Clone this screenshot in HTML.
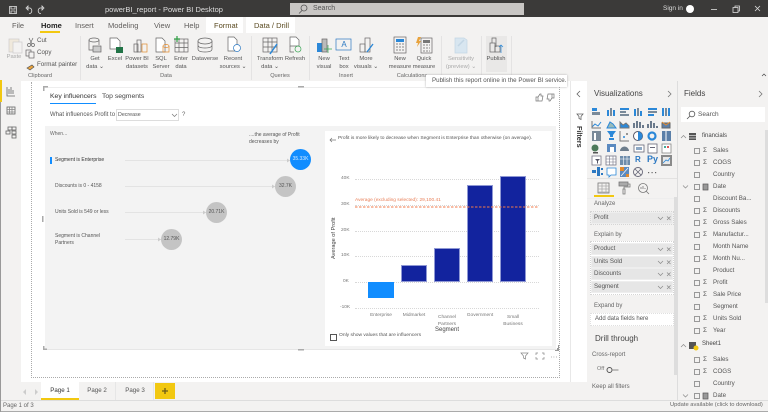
<!DOCTYPE html>
<html><head><meta charset="utf-8"><style>
html,body{margin:0;padding:0;width:768px;height:412px;overflow:hidden;background:#fff}
#r{position:relative;width:768px;height:412px;overflow:hidden;font-family:"Liberation Sans",sans-serif;color:#444;font-size:7px;filter:blur(.35px)}
#r div{position:absolute}
.t{position:absolute;white-space:nowrap;line-height:1}
.c{position:absolute;white-space:nowrap;line-height:1;transform:translateX(-50%);text-align:center}
.tab{font-size:7.500px;top:22px;color:#605e5c}
.l{font-size:5.800px;color:#555}
.g{font-size:5.600px;color:#666;top:74px}
.f{font-size:6.200px;color:#555}
.s{font-size:6.500px;color:#555}
.p{font-size:6.200px;color:#555}
.pill{left:591px;width:82px;height:12px;background:#e6e6e6;border:1px solid #eee;box-sizing:border-box}
#r .cb{width:6px;height:6px;border:1px solid #999;left:694px;box-sizing:border-box;margin-top:-1px}
.bar{background:#12239e;border:1px solid #8f98d4;box-sizing:border-box}
.bub{border-radius:50%;width:21px;height:21px;background:#c4c4c4;font-size:5px;color:#555;text-align:center;line-height:21px}
.ln{height:1px;background:#e3e3e3}
.gl{left:355px;width:184px;border-top:1px dotted #d8d8d8;height:0}
.tk{font-size:4.800px;color:#777}
svg{position:absolute;overflow:visible}
</style></head><body><div id="r">
<!-- title bar -->
<div style="left:0;top:0;width:768px;height:17px;background:#3b3a39"></div>
<div style="left:290px;top:3px;width:234px;height:12px;background:#c8c6c4"></div>
<svg style="left:0;top:0" width="768" height="17" fill="none" stroke="#ddd" stroke-width=".8">
<rect x="9.500" y="6.500" width="7" height="7"/><path d="M11 6.500v2.500h4v-2.500M11 13.500v-2.500h4v2.500"/>
<path d="M26 8l2-2v4zM27 8h3a3 3 0 0 1 0 5.500h-1"/><path d="M44 8l-2-2v4zM43 8h-3a3 3 0 0 0 0 5.500h1"/>
<circle cx="304" cy="8" r="3" stroke="#555"/><path d="M302 10.500l-3 3" stroke="#555"/>
<path d="M711 9.500h6"/><rect x="733" y="7.500" width="5" height="5"/><path d="M735 7.500v-1.500h4.500v5h-1.500"/><path d="M755 6l5 5M760 6l-5 5"/>
</svg>
<span class="t" style="left:105px;top:6px;font-size:7.500px;color:#ddd">powerBI_report - Power BI Desktop</span>
<span class="t" style="left:313px;top:5px;font-size:7px;color:#555">Search</span>
<span class="t" style="left:663px;top:6px;font-size:6.500px;color:#ddd">Sign in</span>
<div style="left:686px;top:5px;width:8px;height:8px;border-radius:50%;background:#fff"></div>
<!-- ribbon -->
<div style="left:0;top:17px;width:768px;height:64px;background:#f3f2f1"></div>
<div style="left:206px;top:17px;width:37px;height:16px;background:#fff"></div>
<div style="left:246px;top:17px;width:49px;height:16px;background:#fff"></div>
<span class="t tab" style="left:12px">File</span>
<span class="t tab" style="left:41px;color:#222;font-weight:bold">Home</span>
<div style="left:40px;top:31px;width:20px;height:2px;background:#f2c811"></div>
<span class="t tab" style="left:75px">Insert</span><span class="t tab" style="left:108px">Modeling</span>
<span class="t tab" style="left:154px">View</span><span class="t tab" style="left:184px">Help</span>
<span class="t tab" style="left:214px;color:#5a4a20">Format</span><span class="t tab" style="left:254px;color:#5a4a20">Data / Drill</span>
<div style="left:486px;top:36px;width:21px;height:36px;background:#e9e8e7"></div>
<svg style="left:0;top:0" width="768" height="81" fill="none" stroke="#666" stroke-width=".7">
<g stroke="#ddd"><path d="M80.500 36v44M251.500 36v44M309.500 36v44M441.500 36v44M481.500 36v44M511.500 36v44"/></g>
<rect x="9" y="39" width="10" height="13" fill="#f0e9dc" stroke="#ccc"/><rect x="13" y="42" width="9" height="11" fill="#f3f2f1" stroke="#ccc"/>
<path d="M29 38l3 6M33 38l-3 6"/><circle cx="29" cy="45" r="1.500"/><circle cx="33" cy="45" r="1.500"/>
<rect x="26" y="50" width="5" height="6"/><rect x="29" y="52" width="5" height="6" fill="#f3f2f1"/>
<path d="M27 68l5-3 2 2-4 3z" fill="#e8a33d" stroke="#555"/>
<ellipse cx="94" cy="40" rx="5" ry="2"/><path d="M89 40v10h5M99 40v5"/><rect x="93" y="46" width="8" height="6" fill="#ccc"/>
<path d="M110 38h7l3 3v8h-10z" fill="#fff"/><rect x="116" y="47" width="7" height="6" fill="#217346" stroke="none"/>
<rect x="134" y="44" width="4" height="8"/><rect x="137" y="40" width="4" height="12"/><rect x="142" y="44" width="5" height="8" stroke="#e08a2e"/>
<path d="M156 38h6l3 3v11h-9z" fill="#fff"/><ellipse cx="166" cy="46" rx="3" ry="1.500" stroke="#e08a2e"/><path d="M163 46v6h6v-6" stroke="#e08a2e"/>
<rect x="175" y="39" width="13" height="13"/><path d="M175 43h13M175 47.500h13M179 39v13M184 39v13"/><path d="M177 36v6M174 39h6" stroke="#2f9e44" stroke-width="1.200"/>
<ellipse cx="205" cy="41" rx="7" ry="3"/><path d="M198 41v8c0 2 3 3 7 3s7-1 7-3v-8M198 45c0 2 3 3 7 3s7-1 7-3"/>
<path d="M228 37h6l3 3v11h-9z" fill="#fff"/><circle cx="237" cy="48" r="3.500" stroke="#2b78c2" fill="#fff"/>
<rect x="263" y="38" width="14" height="14"/><path d="M263 42h14M268 38v14M272 38v14M263 47h14"/><path d="M270 54l7-10" stroke="#2b88d8" stroke-width="1.500"/>
<path d="M290 37h6l3 3v6h-9z" fill="#fff"/><path d="M290 46v6h4"/><circle cx="298" cy="49" r="3" stroke="#3aa655"/>
<rect x="317" y="43" width="5" height="9" fill="#2b88d8" stroke="none"/><rect x="322" y="39" width="5" height="13" fill="#bbb"/><path d="M328 45v8M324 49h8" stroke="#3aa655"/>
<rect x="336" y="39" width="15" height="11" stroke="#2b78c2"/>
<rect x="360" y="44" width="5" height="8"/><rect x="365" y="38" width="5" height="14"/><path d="M367 52l6-8" stroke="#2b88d8" stroke-width="1.300"/>
<rect x="394" y="37" width="12" height="16"/><rect x="396" y="39" width="8" height="3" fill="#2b88d8" stroke="none"/><path d="M396 44h8M396 47h8M396 50h8" stroke-dasharray="2 1"/>
<rect x="421" y="38" width="11" height="15"/><rect x="423" y="40" width="7" height="3" fill="#777" stroke="none"/><path d="M423 45h7M423 48h7M423 51h7" stroke-dasharray="2 1"/><path d="M418 37l-2 6h2l-1 4 4-6h-2l2-4z" fill="#e8a33d" stroke="none"/>
<path d="M455 38h9l3 2v13h-12z" fill="#d8e6f0" stroke="#c3d6e4"/><path d="M458 46l6-6" stroke="#c3d6e4" stroke-width="1.500"/>
<rect x="490" y="43" width="5" height="9"/><path d="M492 43v-5h4v9"/><rect x="495" y="46" width="5" height="6"/><path d="M501 53v-8M499 47l2-2 2 2" stroke="#2b88d8"/>
<path d="M762 76l2-2 2 2" stroke="#444"/>
</svg>
<span class="c l" style="left:14px;top:55px;color:#aaa">Paste</span>
<span class="t" style="left:37px;top:38px;font-size:6.200px;color:#555">Cut</span><span class="t" style="left:37px;top:50px;font-size:6.200px;color:#555">Copy</span><span class="t" style="left:37px;top:62px;font-size:6.200px;color:#555">Format painter</span>
<span class="c l" style="left:95px;top:55px;line-height:8.300px">Get<br>data ⌄</span>
<span class="c l" style="left:115px;top:55px;line-height:8.300px">Excel</span>
<span class="c l" style="left:137px;top:55px;line-height:8.300px">Power BI<br>datasets</span>
<span class="c l" style="left:161px;top:55px;line-height:8.300px">SQL<br>Server</span>
<span class="c l" style="left:181px;top:55px;line-height:8.300px">Enter<br>data</span>
<span class="c l" style="left:205px;top:55px;line-height:8.300px">Dataverse</span>
<span class="c l" style="left:233px;top:55px;line-height:8.300px">Recent<br>sources ⌄</span>
<span class="c l" style="left:270px;top:55px;line-height:8.300px">Transform<br>data ⌄</span>
<span class="c l" style="left:295px;top:55px;line-height:8.300px">Refresh</span>
<span class="c l" style="left:324px;top:55px;line-height:8.300px">New<br>visual</span>
<span class="c l" style="left:344px;top:55px;line-height:8.300px">Text<br>box</span>
<span class="c l" style="left:366px;top:55px;line-height:8.300px">More<br>visuals ⌄</span>
<span class="c l" style="left:400px;top:55px;line-height:8.300px">New<br>measure</span>
<span class="c l" style="left:424px;top:55px;line-height:8.300px">Quick<br>measure</span>
<span class="c l" style="left:461px;top:55px;line-height:8.300px;color:#aaa">Sensitivity<br>(preview) ⌄</span>
<span class="c l" style="left:496px;top:55px;line-height:8.300px">Publish</span>
<span class="c" style="left:344px;top:41px;font-size:8px;color:#2b78c2">A</span>
<span class="c g" style="left:40px">Clipboard</span><span class="c g" style="left:166px">Data</span><span class="c g" style="left:280px">Queries</span><span class="c g" style="left:346px">Insert</span><span class="c g" style="left:412px">Calculations</span>
<!-- left rail -->
<div style="left:0;top:81px;width:21px;height:319px;background:#f3f2f1"></div>
<div style="left:0;top:81px;width:1px;height:331px;background:#999"></div>
<div style="left:0;top:80px;width:2px;height:22px;background:#f2c811"></div>
<svg style="left:0;top:0" width="30" height="145" fill="none" stroke="#666" stroke-width=".8">
<path d="M7 87v9h8M9 94v-5M11 94v-7M13 94v-4"/>
<rect x="7" y="107" width="8" height="7"/><path d="M7 109.500h8M7 112h8M9.500 107v7M12 107v7" stroke="#888"/>
<rect x="8" y="127" width="4" height="3"/><rect x="12" y="127" width="4" height="3"/><rect x="6" y="131" width="4" height="3"/><rect x="12" y="131" width="4" height="3"/><rect x="12" y="135" width="4" height="3"/>
</svg>
<!-- canvas -->
<div style="left:31px;top:82px;width:529px;height:296px;border:1px dotted #aaa;border-top:none;box-sizing:border-box"></div>
<div style="left:45px;top:87px;width:512px;height:1px;background:#eee"></div>
<div style="left:45px;top:349px;width:512px;height:1px;background:#e6e6e6"></div>
<div style="left:45px;top:126px;width:511px;height:223px;background:#f3f3f3"></div>
<svg style="left:0;top:0" width="560" height="355" fill="#aaa">
<path d="M43 86h5v1.500h-3.500v3.500H43zM43 346h1.500v2.500H47v1.500H43zM298 86h6v1.500h-6zM298 349h6v1.500h-6zM42 216h1.500v6H42z"/>
</svg>
<span class="t" style="left:50px;top:94px;font-size:6.800px;color:#333">Key influencers</span>
<div style="left:50px;top:103px;width:46px;height:1px;background:#118dff"></div>
<span class="t" style="left:102px;top:94px;font-size:6.800px;color:#444">Top segments</span>
<span class="t" style="left:50px;top:112px;font-size:6px;color:#555">What influences Profit to</span>
<div style="left:116px;top:109px;width:63px;height:12px;border:1px solid #ddd;box-sizing:border-box;background:#fff"></div>
<span class="t" style="left:118px;top:113px;font-size:5.300px;color:#555">Decrease</span>
<svg style="left:171px;top:113px" width="6" height="4" fill="none" stroke="#777" stroke-width=".7"><path d="M1 1l2.500 2.500L6 1"/></svg>
<span class="t" style="left:182px;top:112px;font-size:6px;color:#666">?</span>
<svg style="left:535px;top:93px" width="20" height="9" fill="none" stroke="#777" stroke-width=".7"><path d="M1 4h2v4H1zM3 4l2-3h1v2h2l-1 5H3"/><path d="M19 5h-2V1h2zM17 5l-2 3h-1V6h-2l1-5h4"/></svg>
<span class="t" style="left:50px;top:132px;font-size:5px;color:#666">When...</span>
<span class="t" style="left:249px;top:132px;font-size:5px;color:#555;line-height:6.500px">....the average of Profit<br>decreases by</span>
<div style="left:50px;top:157px;width:1.500px;height:7px;background:#118dff"></div>
<span class="t" style="left:55px;top:158px;font-size:5px;color:#333">Segment is Enterprise</span>
<span class="t" style="left:55px;top:184px;font-size:5px;color:#555">Discounts is 0 - 4158</span>
<span class="t" style="left:55px;top:210px;font-size:5px;color:#555">Units Sold is 549 or less</span>
<span class="t" style="left:55px;top:233px;font-size:5px;color:#555;line-height:7px">Segment is Channel<br>Partners</span>
<div class="ln" style="left:125px;top:160px;width:165px"></div>
<div class="ln" style="left:125px;top:186px;width:150px"></div>
<div class="ln" style="left:125px;top:212px;width:81px"></div>
<div class="ln" style="left:125px;top:239px;width:36px"></div>
<svg style="left:0;top:0" width="300" height="250" fill="#ccc"><path d="M287 158.500l3 2-3 2zM272 184.500l3 2-3 2zM203 210.500l3 2-3 2zM158 237.500l3 2-3 2z"/></svg>
<div class="bub" style="left:290px;top:149px;background:#118dff;color:#d6ebff">35.33K</div>
<div class="bub" style="left:275px;top:176px">32.7K</div>
<div class="bub" style="left:206px;top:202px">20.71K</div>
<div class="bub" style="left:161px;top:229px">12.79K</div>
<!-- detail panel -->
<div style="left:325px;top:131px;width:227px;height:215px;background:#fff"></div>
<svg style="left:329px;top:137px" width="8" height="6" fill="none" stroke="#777" stroke-width=".7"><path d="M7 3H1M3 1L1 3l2 2"/></svg>
<span class="t" style="left:338px;top:137px;font-size:4.900px;color:#555">Profit is more likely to decrease when Segment is Enterprise than otherwise (on average).</span>
<div class="gl" style="top:179px"></div><div class="gl" style="top:205px"></div><div class="gl" style="top:231px"></div><div class="gl" style="top:256px"></div><div class="gl" style="top:282px"></div><div class="gl" style="top:308px"></div>
<span class="t tk" style="left:341px;top:177px">40K</span>
<span class="t tk" style="left:341px;top:203px">30K</span>
<span class="t tk" style="left:341px;top:229px">20K</span>
<span class="t tk" style="left:341px;top:254px">10K</span>
<span class="t tk" style="left:343px;top:280px">0K</span>
<span class="t tk" style="left:340px;top:306px">-10K</span>
<span class="t" style="left:332px;top:259px;font-size:5.600px;color:#444;transform:rotate(-90deg);transform-origin:0 0">Average of Profit</span>
<div style="left:368px;top:282px;width:26px;height:16px;background:#118dff"></div>
<div class="bar" style="left:401px;top:265px;width:26px;height:17px"></div>
<div class="bar" style="left:434px;top:248px;width:26px;height:34px"></div>
<div class="bar" style="left:467px;top:185px;width:26px;height:97px"></div>
<div class="bar" style="left:500px;top:176px;width:26px;height:106px"></div>
<svg style="left:355px;top:206px" width="184" height="2" fill="none"><path d="M0 1h184" stroke="#f0784a" stroke-width="1" stroke-dasharray="2.500 1.500"/></svg>
<span class="t" style="left:355px;top:199px;font-size:4.800px;color:#e8805a">Average (excluding selected): 29,100.41</span>
<span class="c tk" style="left:381px;top:314px">Enterprise</span>
<span class="c tk" style="left:414px;top:314px">Midmarket</span>
<span class="c tk" style="left:447px;top:314px;line-height:7px">Channel<br>Partners</span>
<span class="c tk" style="left:480px;top:314px">Government</span>
<span class="c tk" style="left:513px;top:314px;line-height:7px">Small<br>Business</span>
<span class="c" style="left:447px;top:327px;font-size:6px;color:#444">Segment</span>
<div style="left:330px;top:334px;width:5px;height:5px;border:1px solid #555"></div>
<span class="t" style="left:339px;top:334px;font-size:4.950px;color:#555">Only show values that are influencers</span>
<svg style="left:520px;top:351px" width="40" height="10" fill="none" stroke="#888" stroke-width=".7"><path d="M1 2h7L5.500 5v3L3.500 7V5z"/><path d="M16 4V2h2M22 2h2v2M24 6v2h-2M18 8h-2V6"/><path d="M31 6h.8M33.500 6h.8M36 6h.8"/></svg>
<svg style="left:555px;top:345px" width="6" height="7" fill="#999"><path d="M0 5h2V3h1V0h1v6H0z"/></svg>
<!-- tooltip -->
<div style="left:426px;top:75px;width:141px;height:12px;background:#fff;box-shadow:0 0 2px #aaa"></div>
<span class="t" style="left:432px;top:78px;font-size:6.200px;color:#555">Publish this report online in the Power BI service.</span>
<!-- page tabs -->
<div style="left:21px;top:382px;width:568px;height:18px;background:#f3f2f1"></div>
<svg style="left:22px;top:389px" width="18" height="6" fill="#ccc"><path d="M4 0v6L1 3zM13 0v6l3-3z"/></svg>
<div style="left:41px;top:382px;width:38px;height:18px;background:#fff;border-bottom:2px solid #f2c811;box-sizing:border-box"></div>
<div style="left:79px;top:382px;width:37px;height:18px;background:#f3f2f1;border-right:1px solid #e6e6e6;box-sizing:border-box"></div>
<div style="left:117px;top:382px;width:37px;height:18px;background:#f3f2f1;border-right:1px solid #e6e6e6;box-sizing:border-box"></div>
<span class="c" style="left:60px;top:388px;font-size:6.200px;color:#333">Page 1</span>
<span class="c" style="left:97px;top:388px;font-size:6.200px;color:#555">Page 2</span>
<span class="c" style="left:135px;top:388px;font-size:6.200px;color:#555">Page 3</span>
<div style="left:155px;top:383px;width:20px;height:16px;background:#f2c811"></div>
<svg style="left:155px;top:383px" width="20" height="16" stroke="#6d5d1a" stroke-width="1.300"><path d="M10 5v6M7 8h6"/></svg>
<!-- filters -->
<div style="left:570px;top:81px;width:1px;height:301px;background:#e8e8e8"></div>
<div style="left:571px;top:81px;width:16px;height:301px;background:#fff"></div>
<svg style="left:572px;top:88px" width="14" height="34" fill="none" stroke="#666" stroke-width=".8"><path d="M8 3L5 6l3 3"/><path d="M5 26h6l-2 2.500v3l-2-1v-2z"/></svg>
<span class="t" style="left:583px;top:126px;font-size:7.200px;font-weight:bold;color:#333;transform:rotate(90deg);transform-origin:0 0">Filters</span>
<!-- viz -->
<div style="left:587px;top:81px;width:91px;height:319px;background:#f3f2f1"></div>
<div style="left:677px;top:81px;width:1px;height:319px;background:#ddd"></div>
<span class="t" style="left:594px;top:90px;font-size:8px;color:#444">Visualizations</span>
<svg style="left:667px;top:90px" width="5" height="8" fill="none" stroke="#777" stroke-width=".8"><path d="M1 1l3 3-3 3"/></svg>
<svg style="left:587px;top:105px" width="91" height="90" stroke="none">
<g fill="#7a8a99">
<rect x="5" y="3" width="5" height="3" fill="#2b88d8"/><rect x="5" y="7" width="8" height="3"/>
<rect x="20" y="5" width="2" height="6" fill="#2b88d8"/><rect x="23" y="3" width="2" height="8"/><rect x="26" y="5" width="2" height="6" fill="#2b88d8"/>
<rect x="33" y="3" width="9" height="2" fill="#2b88d8"/><rect x="33" y="6" width="6" height="2"/><rect x="33" y="9" width="9" height="2"/>
<rect x="47" y="4" width="2" height="7" fill="#2b88d8"/><rect x="50" y="3" width="2" height="8"/><rect x="53" y="6" width="2" height="5" fill="#2b88d8"/>
<rect x="61" y="3" width="9" height="2" fill="#2b88d8"/><rect x="61" y="6" width="9" height="2"/><rect x="61" y="9" width="6" height="2" fill="#2b88d8"/>
<rect x="75" y="3" width="2" height="8" fill="#2b88d8"/><rect x="78" y="3" width="2" height="8"/><rect x="81" y="3" width="2" height="8" fill="#2b88d8"/>
</g>
<g fill="none" stroke-width="1" transform="translate(0,-1)">
<path d="M5 23l3-3 3 2 3-4" stroke="#2b88d8"/><path d="M5 17v7h9" stroke="#777"/>
<path d="M20 24l3-6 3 2 3 4z" fill="#9bb" stroke="#2b88d8"/>
<path d="M33 18l3 3 3-2 3 3v2h-9z" fill="#2b88d8" stroke="#777"/>
<path d="M47 24v-5M50 24v-7M53 24v-6M56 24v-3" stroke="#6b7a8c" stroke-width="2"/>
<path d="M61 24v-4M64 24v-7M67 24v-5M70 24v-2" stroke="#6b7a8c" stroke-width="2"/>
<path d="M75 24v-5h8v5z" fill="#5b7fa8" stroke="#666"/><path d="M75 18l4 3 4-3" stroke="#e08a2e"/>
</g>
<g transform="translate(0,-3)">
<rect x="5" y="29" width="9" height="10" fill="#7a8a99"/><rect x="7" y="31" width="2" height="7" fill="#fff"/>
<path d="M20 29h9l-3 4v2h-3v-2z" fill="#2b88d8"/><rect x="22" y="36" width="5" height="2" fill="#2b88d8"/>
<path d="M33 29v10h9" fill="none" stroke="#777"/><circle cx="37" cy="35" r="1" fill="#2b88d8"/><circle cx="40" cy="32" r="1" fill="#777"/>
<circle cx="51" cy="34" r="4.500" fill="#fff" stroke="#556" stroke-width="1"/><path d="M51 34v-4.500a4.500 4.500 0 0 1 0 9z" fill="#2b88d8"/>
<circle cx="65" cy="34" r="3.500" fill="none" stroke="#2b88d8" stroke-width="2.200"/>
<rect x="75" y="29" width="9" height="10" fill="#5b7fa8"/><rect x="78.500" y="29" width="1" height="10" fill="#fff"/>
</g>
<g transform="translate(0,-4)">
<circle cx="8" cy="47" r="3.500" fill="#4d7a5a"/><rect x="6" y="51" width="5" height="1.500" fill="#555"/>
<rect x="20" y="43" width="9" height="8" fill="#5b8ac0"/><rect x="23" y="46" width="4" height="5" fill="#fff"/>
<path d="M33 50a4.500 4.500 0 0 1 9 0z" fill="#6d7d8c"/>
<rect x="47" y="44" width="10" height="7" fill="#fff" stroke="#667" stroke-width=".8"/><rect x="49" y="46" width="6" height="3" fill="#8da8c4"/>
<rect x="61" y="43" width="9" height="9" fill="#fff" stroke="#667" stroke-width=".8"/><rect x="63" y="46" width="5" height="1" fill="#667"/>
<rect x="75" y="43" width="9" height="9" fill="#fff" stroke="#888" stroke-width=".8"/><rect x="77" y="45" width="2" height="2" fill="#4a9"/><rect x="80" y="45" width="2" height="2" fill="#d55"/>
</g>
<g transform="translate(0,-5)">
<rect x="5" y="56" width="9" height="9" fill="#fff" stroke="#778" stroke-width=".8"/><path d="M8 59h5l-2 2v3l-1-1v-2z" fill="#556"/>
<rect x="19" y="56" width="10" height="9" fill="#fff" stroke="#778" stroke-width=".8"/><path d="M19 59h10M19 62h10M22.500 56v9M26 56v9" stroke="#778" stroke-width=".6"/>
<rect x="33" y="56" width="10" height="9" fill="#6d8cab"/><path d="M33 59h10M36.500 56v9M40 56v9" stroke="#fff" stroke-width=".6"/>
<rect x="74" y="55" width="11" height="11" fill="#8a8a8a"/><rect x="76" y="57" width="7" height="7" fill="#e8e8e8"/><path d="M76 63l3-3 2 1 2-3" stroke="#2b88d8" stroke-width=".8" fill="none"/>
</g>
<g transform="translate(0,-4)">
<rect x="5" y="69" width="4" height="3" fill="#2b78c2"/><rect x="10" y="66" width="3" height="9" fill="#2b78c2"/><rect x="14" y="67" width="2" height="2" fill="#2b78c2"/><rect x="14" y="72" width="2" height="2" fill="#2b78c2"/>
<path d="M20 67h9v7h-5l-2 2v-2h-2z" fill="#fff" stroke="#2b88d8" stroke-width=".8"/>
<rect x="33" y="66" width="9" height="10" fill="#5b8ac0"/><path d="M33 66h4v4h-4zM39 73h3v3h-3z" fill="#e08a2e"/><path d="M34 75l7-8" stroke="#fff" stroke-width=".7"/>
<circle cx="51" cy="71" r="4.500" fill="none" stroke="#667" stroke-width=".9"/><path d="M48 68l6 6M54 68l-6 6" stroke="#667" stroke-width=".8"/>
<rect x="61" y="71" width="1.200" height="1.200" fill="#666"/><rect x="64.500" y="71" width="1.200" height="1.200" fill="#666"/><rect x="68" y="71" width="1.200" height="1.200" fill="#666"/>
</g>
</svg>
<span class="t" style="left:635px;top:156px;font-size:8px;font-weight:bold;color:#2b78c2">R</span>
<span class="t" style="left:647px;top:155px;font-size:9px;font-weight:bold;color:#2b78c2">Py</span>
<div style="left:587px;top:178px;width:90px;height:1px;background:#e3e2e1"></div>
<svg style="left:587px;top:180px" width="90" height="18" fill="none" stroke="#777" stroke-width=".8">
<rect x="11" y="3" width="11" height="10"/><path d="M11 6h11M11 9h11M11 12h11M15 3v10M19 3v10" stroke="#aaa"/>
<rect x="32" y="2" width="9" height="4" fill="#aaa"/><path d="M41 4h2v3h-6v2M36 9h2v5h-2z"/>
<circle cx="56" cy="8" r="4.500"/><path d="M59 11l3 3M54 9v-2M56 9v-3M58 9v-1"/>
</svg>
<div style="left:594px;top:195px;width:20px;height:2px;background:#f2c811"></div>
<div style="left:587px;top:198px;width:87px;height:1px;background:#eee"></div>
<span class="t" style="left:594px;top:201px;font-size:6px;color:#666">Analyze</span>
<div style="left:674px;top:197px;width:3px;height:178px;background:#ddd"></div>
<div style="left:590px;top:211px;width:84px;height:14px;border:1px dotted #d5d5d5;box-sizing:border-box"></div>
<div class="pill" style="top:212px"></div><span class="t p" style="left:594px;top:215px">Profit</span>
<span class="t" style="left:594px;top:232px;font-size:6px;color:#666">Explain by</span>
<div style="left:590px;top:241px;width:84px;height:54px;background:#fff;border:1px dotted #d5d5d5;box-sizing:border-box"></div>
<div class="pill" style="top:243px"></div><span class="t p" style="left:594px;top:246px">Product</span>
<div class="pill" style="top:256px"></div><span class="t p" style="left:594px;top:259px">Units Sold</span>
<div class="pill" style="top:268px"></div><span class="t p" style="left:594px;top:271px">Discounts</span>
<div class="pill" style="top:281px"></div><span class="t p" style="left:594px;top:284px">Segment</span>
<svg style="left:657px;top:214px" width="16" height="80" fill="none" stroke="#888" stroke-width=".7">
<path d="M1 3l2.500 2.500L6 3M10 2.500l3.500 3.500M13.500 2.500L10 6"/>
<path d="M1 34l2.500 2.500L6 34M10 33.500l3.500 3.500M13.500 33.500L10 37"/>
<path d="M1 47l2.500 2.500L6 47M10 46.500l3.500 3.500M13.500 46.500L10 50"/>
<path d="M1 59l2.500 2.500L6 59M10 58.500l3.500 3.500M13.500 58.500L10 62"/>
<path d="M1 72l2.500 2.500L6 72M10 71.500l3.500 3.500M13.500 71.500L10 75"/>
</svg>
<span class="t" style="left:594px;top:303px;font-size:6px;color:#666">Expand by</span>
<div style="left:590px;top:313px;width:84px;height:13px;background:#fff;border:1px dotted #e0e0e0;box-sizing:border-box"></div>
<span class="t" style="left:595px;top:316px;font-size:6px;color:#555">Add data fields here</span>
<span class="t" style="left:595px;top:335px;font-size:8px;color:#444">Drill through</span>
<span class="t" style="left:592px;top:352px;font-size:6px;color:#666">Cross-report</span>
<span class="t" style="left:597px;top:367px;font-size:5.500px;color:#777">Off</span>
<svg style="left:606px;top:366px" width="18" height="8" fill="none" stroke="#555"><circle cx="3.500" cy="4" r="2.500"/><path d="M6 4h6.500" stroke="#888"/></svg>
<span class="t" style="left:592px;top:384px;font-size:6px;color:#666">Keep all filters</span>
<!-- fields -->
<div style="left:678px;top:81px;width:90px;height:319px;background:#f3f2f1"></div>
<span class="t" style="left:684px;top:90px;font-size:8px;color:#444">Fields</span>
<svg style="left:758px;top:90px" width="5" height="8" fill="none" stroke="#777" stroke-width=".8"><path d="M1 1l3 3-3 3"/></svg>
<div style="left:681px;top:107px;width:84px;height:15px;background:#fff"></div>
<svg style="left:686px;top:110px" width="10" height="10" fill="none" stroke="#555" stroke-width=".8"><circle cx="6" cy="4" r="2.800"/><path d="M4 6L1 9"/></svg>
<span class="t" style="left:698px;top:112px;font-size:6.500px;color:#555">Search</span>
<div style="left:765px;top:130px;width:3px;height:173px;background:#ddd"></div>
<svg style="left:678px;top:130px" width="90" height="275" fill="none" stroke="#888" stroke-width=".7">
<path d="M3 8l2.500-2.500L8 8M5 55.500l2.500 2.500L10 55.500"/>
<rect x="11" y="3" width="7" height="7" fill="#555" stroke="none"/><path d="M11 5.500h7M11 8h7" stroke="#ddd"/>
<rect x="25" y="54" width="5" height="6" fill="#999" stroke="#555"/>
<path d="M3 217l2.500-2.500L8 217"/>
<rect x="11" y="212" width="7" height="7" fill="#555" stroke="none"/><circle cx="18" cy="218" r="2.500" fill="#f2c811" stroke="none"/>
<path d="M5 264.500l2.500 2.500L10 264.500"/>
<rect x="25" y="263" width="5" height="6" fill="#999" stroke="#555"/>
</svg>
<span class="t" style="left:702px;top:133px;font-size:6px;color:#444">financials</span>
<span class="t" style="left:702px;top:341px;font-size:6px;color:#444">Sheet1</span>
<!-- field rows -->
<div class="cb" style="top:149px"></div><span class="t s" style="left:703px;top:148px">Σ</span><span class="t f" style="left:713px;top:148px">Sales</span>
<div class="cb" style="top:161px"></div><span class="t s" style="left:703px;top:160px">Σ</span><span class="t f" style="left:713px;top:160px">COGS</span>
<div class="cb" style="top:173px"></div><span class="t f" style="left:713px;top:172px">Country</span>
<div class="cb" style="top:185px"></div><span class="t f" style="left:713px;top:184px">Date</span>
<div class="cb" style="top:197px"></div><span class="t f" style="left:713px;top:196px">Discount Ba...</span>
<div class="cb" style="top:209px"></div><span class="t s" style="left:703px;top:208px">Σ</span><span class="t f" style="left:713px;top:208px">Discounts</span>
<div class="cb" style="top:221px"></div><span class="t s" style="left:703px;top:220px">Σ</span><span class="t f" style="left:713px;top:220px">Gross Sales</span>
<div class="cb" style="top:233px"></div><span class="t s" style="left:703px;top:232px">Σ</span><span class="t f" style="left:713px;top:232px">Manufactur...</span>
<div class="cb" style="top:245px"></div><span class="t f" style="left:713px;top:244px">Month Name</span>
<div class="cb" style="top:257px"></div><span class="t s" style="left:703px;top:256px">Σ</span><span class="t f" style="left:713px;top:256px">Month Nu...</span>
<div class="cb" style="top:269px"></div><span class="t f" style="left:713px;top:268px">Product</span>
<div class="cb" style="top:281px"></div><span class="t s" style="left:703px;top:280px">Σ</span><span class="t f" style="left:713px;top:280px">Profit</span>
<div class="cb" style="top:293px"></div><span class="t s" style="left:703px;top:292px">Σ</span><span class="t f" style="left:713px;top:292px">Sale Price</span>
<div class="cb" style="top:305px"></div><span class="t f" style="left:713px;top:304px">Segment</span>
<div class="cb" style="top:317px"></div><span class="t s" style="left:703px;top:316px">Σ</span><span class="t f" style="left:713px;top:316px">Units Sold</span>
<div class="cb" style="top:329px"></div><span class="t s" style="left:703px;top:328px">Σ</span><span class="t f" style="left:713px;top:328px">Year</span>
<div class="cb" style="top:358px"></div><span class="t s" style="left:703px;top:357px">Σ</span><span class="t f" style="left:713px;top:357px">Sales</span>
<div class="cb" style="top:370px"></div><span class="t s" style="left:703px;top:369px">Σ</span><span class="t f" style="left:713px;top:369px">COGS</span>
<div class="cb" style="top:382px"></div><span class="t f" style="left:713px;top:381px">Country</span>
<div class="cb" style="top:394px"></div><span class="t f" style="left:713px;top:393px">Date</span>
<!-- status -->
<div style="left:0;top:400px;width:768px;height:12px;background:#f3f2f1;border-top:1px solid #ddd;box-sizing:border-box"></div>
<div style="left:0;top:411px;width:768px;height:1px;background:#aaa"></div>
<div style="left:0;top:400px;width:1px;height:12px;background:#999"></div>
<span class="t" style="left:3px;top:403px;font-size:6px;color:#666">Page 1 of 3</span>
<span class="t" style="left:670px;top:403px;font-size:5.800px;color:#666">Update available (click to download)</span>
</div></body></html>
